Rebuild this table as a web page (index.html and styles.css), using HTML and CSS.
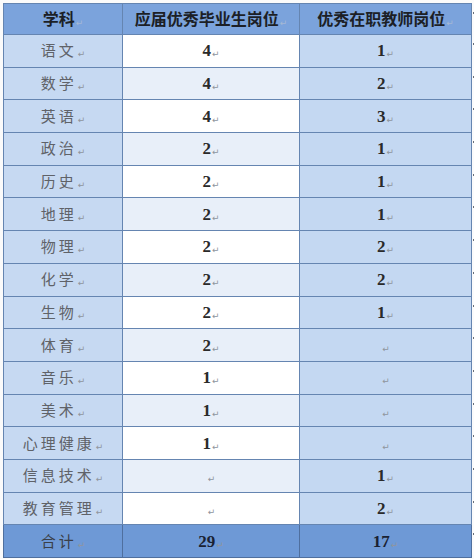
FILE: index.html
```html
<!DOCTYPE html>
<html lang="zh">
<head>
<meta charset="utf-8">
<title>岗位表</title>
<link rel="stylesheet" href="styles.css">
</head>
<body>
<table class="jobs">
  <colgroup>
    <col class="c1"><col class="c2"><col class="c3">
  </colgroup>
  <thead>
    <tr class="head">
      <th>学科<span class="pm">↵</span></th>
      <th>应届优秀毕业生岗位<span class="pm">↵</span></th>
      <th>优秀在职教师岗位<span class="pm">↵</span></th>
    </tr>
  </thead>
  <tbody>
    <tr class="odd"><td class="subj">语文<span class="pm">↵</span></td><td class="num">4<span class="pm">↵</span></td><td class="num">1<span class="pm">↵</span></td></tr>
    <tr class="even"><td class="subj">数学<span class="pm">↵</span></td><td class="num">4<span class="pm">↵</span></td><td class="num">2<span class="pm">↵</span></td></tr>
    <tr class="odd"><td class="subj">英语<span class="pm">↵</span></td><td class="num">4<span class="pm">↵</span></td><td class="num">3<span class="pm">↵</span></td></tr>
    <tr class="even"><td class="subj">政治<span class="pm">↵</span></td><td class="num">2<span class="pm">↵</span></td><td class="num">1<span class="pm">↵</span></td></tr>
    <tr class="odd"><td class="subj">历史<span class="pm">↵</span></td><td class="num">2<span class="pm">↵</span></td><td class="num">1<span class="pm">↵</span></td></tr>
    <tr class="even"><td class="subj">地理<span class="pm">↵</span></td><td class="num">2<span class="pm">↵</span></td><td class="num">1<span class="pm">↵</span></td></tr>
    <tr class="odd"><td class="subj">物理<span class="pm">↵</span></td><td class="num">2<span class="pm">↵</span></td><td class="num">2<span class="pm">↵</span></td></tr>
    <tr class="even"><td class="subj">化学<span class="pm">↵</span></td><td class="num">2<span class="pm">↵</span></td><td class="num">2<span class="pm">↵</span></td></tr>
    <tr class="odd"><td class="subj">生物<span class="pm">↵</span></td><td class="num">2<span class="pm">↵</span></td><td class="num">1<span class="pm">↵</span></td></tr>
    <tr class="even"><td class="subj">体育<span class="pm">↵</span></td><td class="num">2<span class="pm">↵</span></td><td class="num"><span class="pm">↵</span></td></tr>
    <tr class="odd"><td class="subj">音乐<span class="pm">↵</span></td><td class="num">1<span class="pm">↵</span></td><td class="num"><span class="pm">↵</span></td></tr>
    <tr class="even"><td class="subj">美术<span class="pm">↵</span></td><td class="num">1<span class="pm">↵</span></td><td class="num"><span class="pm">↵</span></td></tr>
    <tr class="odd"><td class="subj">心理健康<span class="pm">↵</span></td><td class="num">1<span class="pm">↵</span></td><td class="num"><span class="pm">↵</span></td></tr>
    <tr class="even"><td class="subj">信息技术<span class="pm">↵</span></td><td class="num"><span class="pm">↵</span></td><td class="num">1<span class="pm">↵</span></td></tr>
    <tr class="odd"><td class="subj">教育管理<span class="pm">↵</span></td><td class="num"><span class="pm">↵</span></td><td class="num">2<span class="pm">↵</span></td></tr>
  </tbody>
  <tfoot>
    <tr class="total"><td class="subj">合计<span class="pm">↵</span></td><td class="num">29<span class="pm">↵</span></td><td class="num">17<span class="pm">↵</span></td></tr>
  </tfoot>
</table>
</body>
</html>
```
FILE: styles.css
```css
html, body {
  margin: 0;
  padding: 0;
  background: #fbfbfb;
}

body {
  padding: 3px 0 0 3px;
}

.jobs {
  border-collapse: collapse;
  table-layout: fixed;
  width: 468px;
  border: 1px solid #7d8ea6;
  font-family: "Noto Sans CJK SC", sans-serif;
}

.c1 { width: 119px; }
.c2 { width: 177px; }
.c3 { width: 172px; }

.jobs th,
.jobs td {
  border: 1px solid #6585b1;
  padding: 0;
  text-align: center;
  vertical-align: middle;
  position: relative;
}

.jobs td:last-child::after,
.jobs th:last-child::after {
  content: "";
  position: absolute;
  right: -5px;
  top: 8px;
  width: 3px;
  height: 2px;
  background: #6a6f78;
}

.head th {
  height: 30px;
  background: #7ba3dc;
  font-size: 16px;
  font-weight: bold;
  color: #1c1f26;
  line-height: 1;
}

.jobs tbody tr,
.jobs tfoot tr {
  height: 32.7px;
}

.subj {
  background: #c6d9f2;
  color: #5f6268;
  font-size: 15px;
  letter-spacing: 3px;
  line-height: 1;
}

.num {
  font-family: "Liberation Serif", serif;
  font-weight: bold;
  font-size: 17px;
  color: #2a2a2a;
  line-height: 1;
}

.odd .num:nth-child(2) { background: #ffffff; }
.even .num:nth-child(2) { background: #e8eff9; }
.num:nth-child(3) { background: #c4d8f2; }

.total td,
.total .num:nth-child(3) {
  background: #6e99d6;
  border-color: #4f6f9e;
}

.total .subj {
  color: #3a3f48;
}

.total .num {
  color: #1a2233;
}

.pm {
  font-family: "DejaVu Sans", sans-serif;
  font-size: 9px;
  font-weight: normal;
  color: #8f959d;
  letter-spacing: 0;
  margin-left: 1px;
  vertical-align: -1px;
}

.head .pm {
  color: #a5b8d4;
}
```
